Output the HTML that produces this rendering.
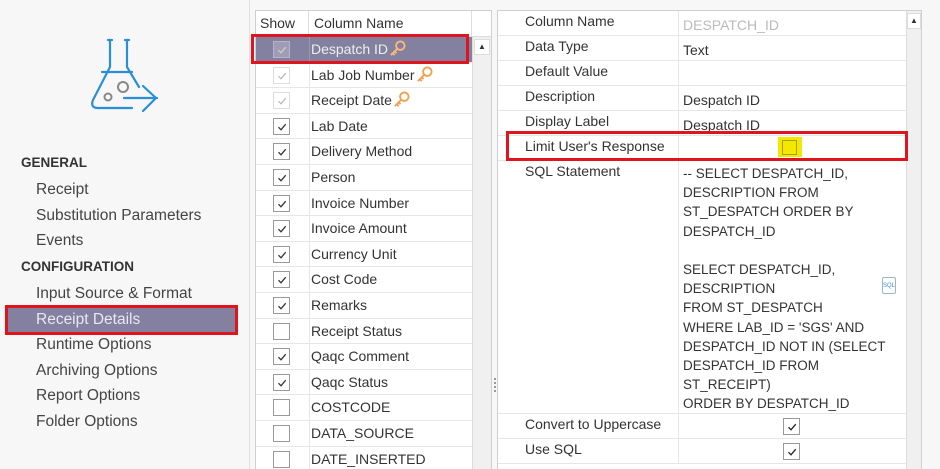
<!DOCTYPE html>
<html><head><meta charset="utf-8"><style>
*{margin:0;padding:0;box-sizing:border-box}
html{width:940px;height:469px;overflow:hidden}
body{width:940px;height:469px;background:#f7f7f7;font-family:"Liberation Sans",sans-serif;color:#333;position:relative;overflow:hidden}
.abs{position:absolute}
.nav{position:absolute;left:36px;font-size:15.5px;color:#444;line-height:20px}
.hd{position:absolute;left:21px;font-size:13.5px;font-weight:bold;color:#333}
.grid{position:absolute;left:255px;top:10px;width:237px;height:470px;border:1px solid #cfcfcf;background:#fff;overflow:hidden}
.row{position:absolute;left:0;width:216px;height:25.6px;border-bottom:1px solid #e6e6e6;font-size:14px;line-height:25px}
.row .cb{position:absolute;left:17px;top:4px;width:17px;height:17px;border:1px solid #9a9a9a;background:#fff}
.row .nm{position:absolute;left:53px;top:0;padding-left:1px;border-left:1px solid #e6e6e6;height:100%;white-space:nowrap}
.ck{position:absolute;left:3px;top:3px}
.pg{position:absolute;left:497px;top:10px;width:425px;height:460px;border:1px solid #cfcfcf;background:#fff;overflow:hidden}
.pr{position:absolute;left:0;width:408px;border-bottom:1px solid #e6e6e6;font-size:14px}
.pr .l{position:absolute;left:27px;top:2px}
.pr .v{position:absolute;left:180px;top:0;height:100%;border-left:1px solid #e6e6e6;padding-left:4px;padding-top:5px;line-height:19.2px}
.key{display:inline-block;vertical-align:-3px;margin-left:1px}
</style></head><body>
<svg width="0" height="0" style="position:absolute"><defs>
<symbol id="ck" viewBox="0 0 10 10"><path d="M1.5 5.2l2.5 2.6L8.7 2.2" fill="none" stroke="currentColor" stroke-width="1.3"/></symbol>
<symbol id="key" viewBox="0 0 18 18"><circle cx="12" cy="6" r="4.5" fill="none" stroke="currentColor" stroke-width="2"/><path d="M9 9L2 16M4 14l2 2M6 12l2 2" fill="none" stroke="currentColor" stroke-width="2"/></symbol>
</defs></svg>
<svg class="abs" style="left:0;top:0" width="200" height="130" fill="none" stroke="#2a8fd6" stroke-width="2.2" stroke-linecap="round" stroke-linejoin="round">
<path d="M110 40v27L93 100q-3 8 5 8h34"/><path d="M127 40v27l12 20"/><path d="M108 40h4M125 40h4"/>
<path d="M102 72h30"/><path d="M124 98h33M143 86l13 12-13 13"/>
<circle cx="123" cy="87" r="5" stroke="#888" stroke-width="2"/><circle cx="108" cy="97" r="3.5" stroke="#888" stroke-width="2"/>
</svg>
<div class="hd" style="top:155px">GENERAL</div>
<div class="nav" style="top:180px">Receipt</div>
<div class="nav" style="top:206px">Substitution Parameters</div>
<div class="nav" style="top:231px">Events</div>
<div class="hd" style="top:259px">CONFIGURATION</div>
<div class="nav" style="top:284px">Input Source &amp; Format</div>
<div class="abs" style="left:5px;top:305px;width:233px;height:30px;border:3px solid #e0141c;background:#8480a0"></div>
<div class="nav" style="top:310px;color:#e8e8f0">Receipt Details</div>
<div class="nav" style="top:335px">Runtime Options</div>
<div class="nav" style="top:361px">Archiving Options</div>
<div class="nav" style="top:386px">Report Options</div>
<div class="nav" style="top:412px">Folder Options</div>
<div class="abs" style="left:249px;top:0;width:1px;height:469px;background:#e0e0e0"></div>

<div class="grid">
 <div class="abs" style="left:0;top:0;width:235px;height:26px;border-bottom:1px solid #ddd;font-size:14px;line-height:25px">
  <span class="abs" style="left:4px">Show</span>
  <span class="abs" style="left:52px;height:25px;border-left:1px solid #ddd;padding-left:5px;width:164px;border-right:1px solid #ddd">Column Name</span>
 </div>
 <div class="abs" style="left:216px;top:26px;width:20px;height:450px;background:#f0f0f0;border-left:1px solid #ddd"></div>
 <div class="abs" style="left:218px;top:28px;width:16px;height:16px;background:#fff;border:1px solid #ddd;font-size:8px;text-align:center;line-height:14px">▲</div>
 <div class="row" style="top:26px;background:#8480a0;color:#eee"><div class="cb" style="background:#a09cb8;border-color:#b8b4c8;color:#ccc"><svg class="ck" width="10" height="10"><use href="#ck"/></svg></div><div class="nm" style="border-color:#9a96b0">Despatch ID<svg class="key" width="17" height="17" style="color:#fbb878"><use href="#key"/></svg></div></div>
 <div class="row" style="top:51.6px"><div class="cb" style="border-color:#ddd;color:#bbb"><svg class="ck" width="10" height="10"><use href="#ck"/></svg></div><div class="nm">Lab Job Number<svg class="key" width="17" height="17" style="color:#f0a050"><use href="#key"/></svg></div></div>
 <div class="row" style="top:77.2px"><div class="cb" style="border-color:#ddd;color:#bbb"><svg class="ck" width="10" height="10"><use href="#ck"/></svg></div><div class="nm">Receipt Date<svg class="key" width="17" height="17" style="color:#f0a050"><use href="#key"/></svg></div></div>
 <div class="row" style="top:102.8px"><div class="cb"><svg class="ck" width="10" height="10"><use href="#ck"/></svg></div><div class="nm">Lab Date</div></div>
 <div class="row" style="top:128.4px"><div class="cb"><svg class="ck" width="10" height="10"><use href="#ck"/></svg></div><div class="nm">Delivery Method</div></div>
 <div class="row" style="top:154px"><div class="cb"><svg class="ck" width="10" height="10"><use href="#ck"/></svg></div><div class="nm">Person</div></div>
 <div class="row" style="top:179.6px"><div class="cb"><svg class="ck" width="10" height="10"><use href="#ck"/></svg></div><div class="nm">Invoice Number</div></div>
 <div class="row" style="top:205.2px"><div class="cb"><svg class="ck" width="10" height="10"><use href="#ck"/></svg></div><div class="nm">Invoice Amount</div></div>
 <div class="row" style="top:230.8px"><div class="cb"><svg class="ck" width="10" height="10"><use href="#ck"/></svg></div><div class="nm">Currency Unit</div></div>
 <div class="row" style="top:256.4px"><div class="cb"><svg class="ck" width="10" height="10"><use href="#ck"/></svg></div><div class="nm">Cost Code</div></div>
 <div class="row" style="top:282px"><div class="cb"><svg class="ck" width="10" height="10"><use href="#ck"/></svg></div><div class="nm">Remarks</div></div>
 <div class="row" style="top:307.6px"><div class="cb"></div><div class="nm">Receipt Status</div></div>
 <div class="row" style="top:333.2px"><div class="cb"><svg class="ck" width="10" height="10"><use href="#ck"/></svg></div><div class="nm">Qaqc Comment</div></div>
 <div class="row" style="top:358.8px"><div class="cb"><svg class="ck" width="10" height="10"><use href="#ck"/></svg></div><div class="nm">Qaqc Status</div></div>
 <div class="row" style="top:384.4px"><div class="cb"></div><div class="nm">COSTCODE</div></div>
 <div class="row" style="top:410px"><div class="cb"></div><div class="nm">DATA_SOURCE</div></div>
 <div class="row" style="top:435.6px"><div class="cb"></div><div class="nm">DATE_INSERTED</div></div>
</div>
<div class="abs" style="left:251px;top:34px;width:218px;height:30px;border:3px solid #e0141c"></div>

<div class="pg">
 <div class="abs" style="left:408px;top:0;width:16px;height:460px;background:#f0f0f0;border-left:1px solid #ddd"></div>
 <div class="abs" style="left:409px;top:2px;width:14px;height:16px;background:#fff;border:1px solid #ddd;font-size:8px;text-align:center;line-height:14px">▲</div>
 <div class="pr" style="top:0;height:25px"><span class="l">Column Name</span><div class="v" style="color:#bbb">DESPATCH_ID</div></div>
 <div class="pr" style="top:25px;height:25px"><span class="l">Data Type</span><div class="v">Text</div></div>
 <div class="pr" style="top:50px;height:25px"><span class="l">Default Value</span><div class="v"></div></div>
 <div class="pr" style="top:75px;height:25px"><span class="l">Description</span><div class="v">Despatch ID</div></div>
 <div class="pr" style="top:100px;height:25px"><span class="l">Display Label</span><div class="v">Despatch ID</div></div>
 <div class="pr" style="top:125px;height:25px"><span class="l">Limit User's Response</span><div class="v"></div></div>
 <div class="pr" style="top:150px;height:253px"><span class="l">SQL Statement</span><div class="v" style="width:228px;padding-top:3px;font-size:13.5px">-- SELECT DESPATCH_ID,<br>DESCRIPTION FROM<br>ST_DESPATCH ORDER BY<br>DESPATCH_ID<br><br>SELECT DESPATCH_ID,<br>DESCRIPTION<br>FROM ST_DESPATCH<br>WHERE LAB_ID = 'SGS' AND<br>DESPATCH_ID NOT IN (SELECT<br>DESPATCH_ID FROM<br>ST_RECEIPT)<br>ORDER BY DESPATCH_ID</div>
  <div class="abs" style="left:384px;top:116px;width:14px;height:17px;border:1px solid #9bb;border-radius:2px;font-size:6px;color:#3a8fd0;text-align:center;line-height:16px">SQL</div></div>
 <div class="pr" style="top:403px;height:25px"><span class="l">Convert to Uppercase</span><div class="v" style="width:228px"><div class="abs" style="left:104px;top:4px;width:17px;height:17px;border:1px solid #999;color:#222"><svg class="ck" width="10" height="10"><use href="#ck"/></svg></div></div></div>
 <div class="pr" style="top:428px;height:25px"><span class="l">Use SQL</span><div class="v" style="width:228px"><div class="abs" style="left:104px;top:4px;width:17px;height:17px;border:1px solid #999;color:#222"><svg class="ck" width="10" height="10"><use href="#ck"/></svg></div></div></div>
</div>
<div class="abs" style="left:506px;top:131px;width:402px;height:30px;border:3px solid #e0141c"></div>
<div class="abs" style="left:778px;top:137px;width:24px;height:20px;background:#f4e800"></div>
<div class="abs" style="left:782px;top:140px;width:15px;height:15px;border:1px solid #a8a000"></div>
<div class="abs" style="left:494px;top:378px;width:2px;height:14px;border-left:2px dotted #999"></div>
</body></html>
